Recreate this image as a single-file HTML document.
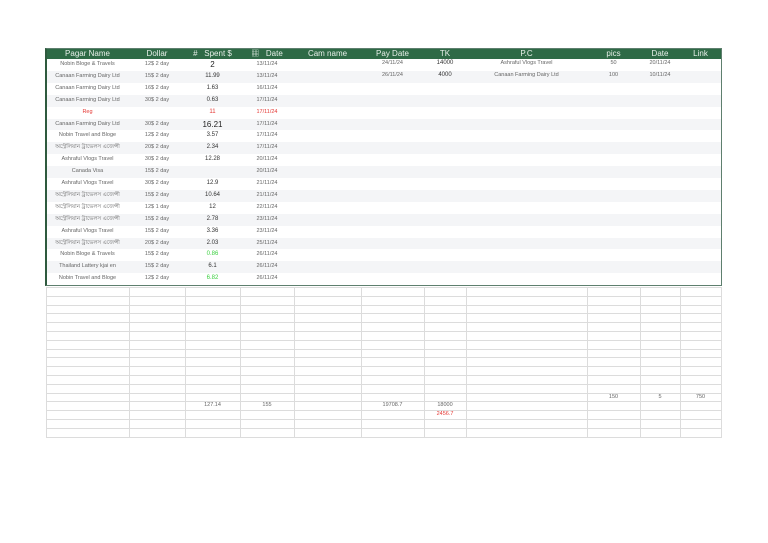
<!DOCTYPE html>
<html><head><meta charset="utf-8"><style>
*{margin:0;padding:0;box-sizing:border-box}
body{width:768px;height:543px;background:#fff;position:relative;overflow:hidden;font-family:"Liberation Sans","Noto Sans CJK SC",sans-serif;color:#555}
.c{position:absolute;text-align:center;white-space:nowrap;overflow:visible}
.hd{position:absolute;left:45px;top:48px;width:677px;height:11px;background:#2e6a46}
.h{position:absolute;top:48px;height:11px;line-height:11px;color:#e8f0ea;font-size:8px;text-align:center}
.box{position:absolute;left:45px;top:48px;width:677px;height:238px;border:1px solid #5e7f6e;border-left:2px solid #2e5a3e}
.band{position:absolute;left:47px;width:674px;background:#f4f5f7}
.t{font-size:5.5px;color:#666}
.n{font-size:6px;color:#333}
.gl{position:absolute;background:#dcdcdc}
</style></head><body>
<div id="bands"></div>
<div class="hd"></div>
<div class="box"></div>
<div id="g"></div>
<script>
(function(){
const X=[46,129,185,240,294,361,424,466,587,640,680,721];
const H=["Pagar Name","Dollar","#&nbsp;&nbsp;&nbsp;Spent $","▦&nbsp;&nbsp;&nbsp;Date","Cam name","Pay Date","TK","P.C","pics","Date","Link"];
let s="";
for(let i=0;i<11;i++)s+=`<div class="h" style="left:${X[i]}px;width:${X[i+1]-X[i]}px">${H[i]}</div>`;
const B="অস্ট্রেলিয়ান ট্রাভেলস এজেন্সী";
const R=[
["Nobin Bloge & Travels","12$ 2 day","2","13/11/24","","24/11/24","14000","Ashraful Vlogs Travel","50","20/11/24"],
["Canaan Farming Dairy Ltd","15$ 2 day","11.99","13/11/24","","26/11/24","4000","Canaan Farming Dairy Ltd","100","10/11/24"],
["Canaan Farming Dairy Ltd","16$ 2 day","1.63","16/11/24"],
["Canaan Farming Dairy Ltd","30$ 2 day","0.63","17/11/24"],
["Reg","","11","17/11/24"],
["Canaan Farming Dairy Ltd","30$ 2 day","16.21","17/11/24"],
["Nobin Travel and Bloge","12$ 2 day","3.57","17/11/24"],
[B,"20$ 2 day","2.34","17/11/24"],
["Ashraful Vlogs Travel","30$ 2 day","12.28","20/11/24"],
["Canada Visa","15$ 2 day","","20/11/24"],
["Ashraful Vlogs Travel","30$ 2 day","12.9","21/11/24"],
[B,"15$ 2 day","10.64","21/11/24"],
[B,"12$ 1 day","12","22/11/24"],
[B,"15$ 2 day","2.78","23/11/24"],
["Ashraful Vlogs Travel","15$ 2 day","3.36","23/11/24"],
[B,"20$ 2 day","2.03","25/11/24"],
["Nobin Bloge & Travels","15$ 2 day","0.86","26/11/24"],
["Thailand Lattery kjai en","15$ 2 day","6.1","26/11/24"],
["Nobin Travel and Bloge","12$ 2 day","6.82","26/11/24"]];
const rh=11.9;let bands="";
R.forEach((r,k)=>{
 const y=59+k*rh;
 if(k%2==1)bands+=`<div class="band" style="top:${y}px;height:${rh}px"></div>`;
 r.forEach((v,i)=>{
  if(!v)return;
  let cls=(i==2||i==6)?"n":"t",st="";
  if(k==4)st+="color:#e53935;";
  if(i==2&&(k==16||k==18))st+="color:#3cd040;";
  if(i==2&&(k==0||k==5))st+="font-size:8px;color:#222;";
  let ty=y+(k<2&&i>=4?-1:0);
  s+=`<div class="c ${cls}" style="left:${X[i]}px;width:${X[i+1]-X[i]}px;top:${ty}px;height:${rh}px;line-height:${rh}px;${st}">${v}</div>`;
 });
});
const T0=287,lh=8.8,n=17;
for(let j=0;j<=n;j++)s+=`<div class="gl" style="left:46px;width:676px;top:${T0+j*lh}px;height:1px"></div>`;
for(let i=0;i<X.length;i++)s+=`<div class="gl" style="left:${X[i]}px;top:${T0}px;width:1px;height:${n*lh}px"></div>`;
function cell(i,row,v,col){s+=`<div class="c t" style="left:${X[i]}px;width:${X[i+1]-X[i]}px;top:${T0+row*lh}px;height:${lh}px;line-height:${lh}px;${col?'color:'+col:''}">${v}</div>`}
cell(8,12,"150");cell(9,12,"5");cell(10,12,"750");
cell(2,13,"127.14");cell(3,13,"155");cell(5,13,"19708.7");cell(6,13,"18000");
cell(6,14,"2456.7","#e53935");
document.getElementById("g").innerHTML=s;
document.getElementById("bands").innerHTML=bands;
})();
</script>
</body></html>
